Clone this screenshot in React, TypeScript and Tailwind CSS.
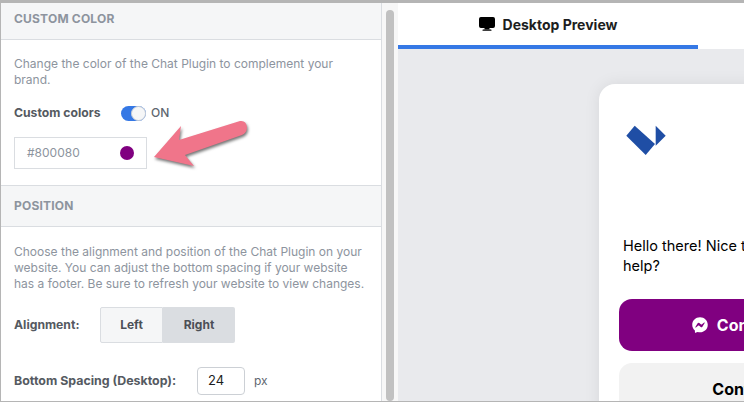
import { FaFacebookMessenger } from "react-icons/fa";

const SectionHeader = ({ title, className }: { title: string; className: string }) => (
  <div className={`flex items-center px-[13px] bg-[#f5f6f7] border-b border-[#dadde1] text-[12px] font-bold tracking-[0.2px] text-[#8d949e] ${className}`}>
    {title}
  </div>
);

const Arrow = () => (
  <svg className="absolute left-[148px] top-[112px] drop-shadow-[1px_2px_1.5px_rgba(0,0,0,0.55)]" width="104" height="56" viewBox="148 112 104 56">
    <path d="M153 154 L180 123 L178 137 L239 118 Q245 117 246 124 Q246 130 241 132 L184 152 L193 163 Z" fill="#f0758a" />
  </svg>
);

const Logo = () => (
  <svg width="41" height="31" viewBox="626 125 41 31">
    <polygon points="626.3,135.7 634.7,125.7 655,144 645.7,155" fill="#1f4ea5" />
    <polygon points="655.7,125.7 665.7,135.7 655.7,145.7" fill="#1f4ea5" />
  </svg>
);

const Monitor = () => (
  <svg width="16" height="14" viewBox="0 0 16 14">
    <rect x="0.75" y="0.75" width="14.5" height="9.5" rx="1.2" fill="#000" stroke="#000" strokeWidth="1.5" />
    <rect x="5.5" y="11" width="5" height="1.5" fill="#000" />
    <rect x="3.5" y="12.5" width="9" height="1.3" rx="0.6" fill="#000" />
  </svg>
);

export default function App() {
  return (
    <div className="relative flex w-[744px] h-[402px] overflow-hidden border-t-[3px] border-l border-b border-[#b5b5b5] bg-white font-['Inter',sans-serif] antialiased">
      <div className="flex flex-col w-[381px] shrink-0 border-r border-[#dadde1]">
        <SectionHeader title="CUSTOM COLOR" className="h-[37px] pb-[5px]" />
        <div className="flex flex-col h-[146px] px-[13px] pt-[16px] border-b border-[#dadde1]">
          <p className="text-[12px] leading-[16px] text-[#8d949e]">
            Change the color of the Chat Plugin to complement your
            <br />
            brand.
          </p>
          <div className="flex items-center mt-[16px] h-[18px]">
            <span className="w-[107px] text-[12.2px] font-bold text-[#555a61]">Custom colors</span>
            <span className="flex justify-end w-[25px] h-[15px] rounded-full bg-[#3578e5]">
              <span className="w-[15px] h-[15px] rounded-full bg-[#f5f6f7] border border-[#ccd0d5]" />
            </span>
            <span className="ml-[5px] text-[12px] font-medium text-[#606770]">ON</span>
          </div>
          <div className="flex items-center justify-between w-[133px] h-[32px] mt-[15px] pl-[12px] pr-[12px] border border-[#dadde1]">
            <span className="text-[12px] text-[#8d949e]">#800080</span>
            <span className="w-[14px] h-[14px] rounded-full bg-[#800080]" />
          </div>
        </div>
        <SectionHeader title="POSITION" className="h-[41px] pb-[1px]" />
        <div className="flex flex-col px-[13px] pt-[17px]">
          <p className="text-[12px] leading-[16px] text-[#8d949e] whitespace-nowrap">
            Choose the alignment and position of the Chat Plugin on your
            <br />
            website. You can adjust the bottom spacing if your website
            <br />
            has a footer. Be sure to refresh your website to view changes.
          </p>
          <div className="flex items-center mt-[15px]">
            <span className="w-[86px] text-[12.2px] font-bold text-[#555a61]">Alignment:</span>
            <div className="flex h-[36px] text-[12px] font-bold text-[#4b4f56]">
              <span className="flex items-center justify-center w-[63px] bg-[#f5f6f7] border border-[#dadde1] rounded-l-[2px]">Left</span>
              <span className="flex items-center justify-center w-[72px] bg-[#dadde1] rounded-r-[2px]">Right</span>
            </div>
          </div>
          <div className="flex items-center mt-[24px]">
            <span className="w-[183px] text-[12.4px] font-bold text-[#555a61]">Bottom Spacing (Desktop):</span>
            <span className="flex items-center w-[48px] h-[28px] pl-[10px] border border-[#ccd0d5] rounded-[4px] text-[13px] text-[#1c1e21]">24</span>
            <span className="ml-[9px] text-[12px] text-[#606770]">px</span>
          </div>
        </div>
      </div>
      <div className="flex justify-center w-[16px] shrink-0 bg-[#f7f7f7] pt-[7px] pr-[1px]">
        <div className="w-[8px] h-full rounded-full bg-[#c1c1c1]" />
      </div>
      <div className="flex flex-col flex-1 min-w-0 overflow-hidden bg-[#e9eaed]">
        <div className="flex h-[46px] shrink-0 bg-white">
          <div className="flex items-center justify-center gap-[8px] w-[300px] border-b-4 border-[#3578e5] text-[14px] font-bold text-[#1c1e21]">
            <Monitor />
            Desktop Preview
          </div>
        </div>
        <div className="pl-[201px] pt-[35px]">
          <div className="flex flex-col w-[356px] h-[400px] px-[20px] pt-[41px] bg-white rounded-[16px] shadow-[0_0_16px_rgba(0,0,0,0.08)]">
            <div className="pl-[7px]">
              <Logo />
            </div>
            <p className="mt-[80px] ml-[4px] text-[14.5px] leading-[20px] text-black">
              Hello there! Nice to meet you. How can we
              <br />
              help?
            </p>
            <div className="flex items-center justify-center gap-[9px] w-[316px] h-[52px] mt-[23px] pr-[2px] rounded-[13px] bg-[#800080] text-[16px] font-bold text-white whitespace-nowrap">
              <FaFacebookMessenger className="w-[16px] h-[16px]" />
              Continue as Guest
            </div>
            <div className="flex justify-center w-[316px] h-[60px] mt-[12px] pt-[14px] pl-[14px] rounded-[13px] bg-[#f2f2f2] text-[16px] font-bold text-black whitespace-nowrap">
              Continue as Guest
            </div>
          </div>
        </div>
      </div>
      <Arrow />
    </div>
  );
}
